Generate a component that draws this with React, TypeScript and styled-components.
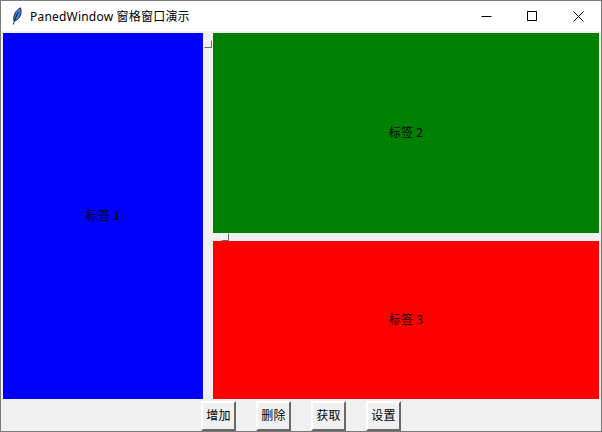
import * as React from "react";
import styled, { createGlobalStyle } from "styled-components";

const GlobalStyle = createGlobalStyle`
  html, body {
    margin: 0;
    padding: 0;
    background: #f0f0f0;
  }
  body {
    font-family: "Noto Sans CJK SC", "Liberation Sans", sans-serif;
  }
`;

const Window = styled.div`
  width: 602px;
  height: 432px;
  box-sizing: border-box;
  border: 1px solid #7a7a7a;
  background: #f0f0f0;
  display: flex;
  flex-direction: column;
  overflow: hidden;
`;

const TitleBar = styled.div`
  height: 30px;
  flex: none;
  background: #fff;
  display: flex;
  align-items: center;
`;

const AppIcon = styled.svg`
  width: 16px;
  height: 18px;
  margin-left: 8px;
  flex: none;
`;

const Title = styled.div`
  margin-left: 5px;
  flex: 1;
  font-size: 12px;
  letter-spacing: 0.2px;
  color: #000;
  font-family: "Noto Sans", "Noto Sans CJK SC", sans-serif;
  white-space: nowrap;
`;

const CaptionButton = styled.div`
  width: 46px;
  height: 30px;
  display: flex;
  align-items: center;
  justify-content: center;
`;

const Panes = styled.div`
  flex: none;
  height: 366px;
  margin: 2px 2px 0;
  display: grid;
  grid-template-columns: 200px 386px;
  column-gap: 10px;
`;

const RightColumn = styled.div`
  display: grid;
  grid-template-rows: 200px 158px;
  row-gap: 8px;
  position: relative;
`;

const Pane = styled.div<{ $bg: string }>`
  background: ${(p) => p.$bg};
  display: flex;
  align-items: center;
  justify-content: center;
  box-sizing: border-box;
  padding-bottom: 4px;
  font-size: 12px;
  letter-spacing: 0.3px;
  color: #000;
  position: relative;
`;

const Sash = styled.div<{ $left: number; $top: number }>`
  position: absolute;
  left: ${(p) => p.$left}px;
  top: ${(p) => p.$top}px;
  width: 8px;
  height: 8px;
  box-sizing: border-box;
  background: #f0f0f0;
  border-left: 1px solid #fff;
  border-top: 1px solid #fff;
  border-right: 1px solid #6d6d6d;
  border-bottom: 1px solid #6d6d6d;
`;

const Toolbar = styled.div`
  flex: none;
  height: 30px;
  margin-top: 2px;
  display: flex;
  justify-content: center;
  gap: 20px;
`;

const ToolButton = styled.button`
  width: 35px;
  height: 30px;
  padding: 0 0 3px;
  box-sizing: border-box;
  background: #f0f0f0;
  font-family: "Noto Sans CJK SC", sans-serif;
  font-size: 12px;
  letter-spacing: 0.3px;
  color: #000;
  border-style: solid;
  border-width: 2px;
  border-color: #fff #696969 #696969 #fff;
  border-radius: 0;
`;

const labels = ["增加", "删除", "获取", "设置"];

export default function App() {
  return (
    <>
      <GlobalStyle />
      <Window>
        <TitleBar>
          <AppIcon viewBox="0 0 16 18">
            <path d="M5 14 C3.8 10 6 3.5 11.5 0.8 C12.8 4 12 9 9.5 11.5 C8 13 6.5 13.8 5 14 Z" fill="#3f7fe0" stroke="#101c33" strokeWidth="0.9" />
            <path d="M4.4 17.5 L5.5 13 L9.5 5" stroke="#0c1424" strokeWidth="0.9" fill="none" />
          </AppIcon>
          <Title>PanedWindow 窗格窗口演示</Title>
          <CaptionButton>
            <svg width="11" height="11" viewBox="0 0 11 11">
              <path d="M0.5 5.5 H10.5" stroke="#000" strokeWidth="1" />
            </svg>
          </CaptionButton>
          <CaptionButton>
            <svg width="11" height="11" viewBox="0 0 11 11">
              <rect x="0.5" y="0.5" width="9" height="9" fill="none" stroke="#000" strokeWidth="1" />
            </svg>
          </CaptionButton>
          <CaptionButton>
            <svg width="11" height="11" viewBox="0 0 11 11">
              <path d="M0.5 0.5 L10.5 10.5 M10.5 0.5 L0.5 10.5" stroke="#000" strokeWidth="1" />
            </svg>
          </CaptionButton>
        </TitleBar>
        <Panes>
          <Pane $bg="#0000ff">
            标签 1
            <Sash $left={201} $top={7} />
          </Pane>
          <RightColumn>
            <Pane $bg="#008000">标签 2</Pane>
            <Pane $bg="#ff0000">标签 3</Pane>
            <Sash $left={8} $top={200} />
          </RightColumn>
        </Panes>
        <Toolbar>
          {labels.map((label) => (
            <ToolButton key={label}>{label}</ToolButton>
          ))}
        </Toolbar>
      </Window>
    </>
  );
}
